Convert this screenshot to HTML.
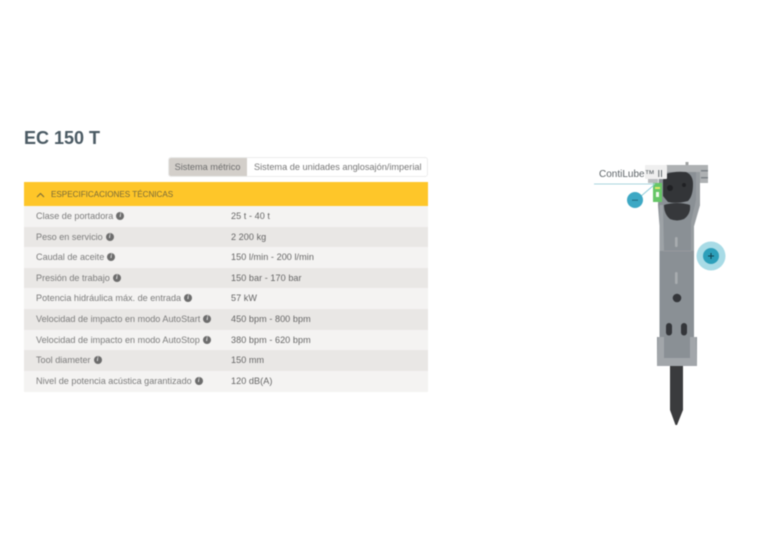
<!DOCTYPE html>
<html lang="es">
<head>
<meta charset="utf-8">
<title>EC 150 T</title>
<style>
html,body{margin:0;padding:0;background:#fff}
body{width:768px;height:543px;position:relative;overflow:hidden;font-family:"Liberation Sans",sans-serif;color:#6f6f6f}
#w{position:absolute;inset:0;filter:blur(.4px)}
h1{position:absolute;left:24px;top:127px;margin:0;font-size:18px;line-height:23px;font-weight:700;color:#4a5a63;letter-spacing:0}
.tg{position:absolute;left:168px;top:157px;width:260px;height:20px;box-sizing:border-box;border:1px solid #ececec;border-radius:3px;background:#fff;font-size:9.2px;line-height:19px;overflow:hidden}
.tg b{position:absolute;left:-1px;top:-1px;width:79px;height:20px;line-height:20px;background:#d3cfca;font-weight:400;text-align:center;color:#6e6e6e}
.tg span{position:absolute;left:85px;top:0;white-space:nowrap;color:#777}
.hd{position:absolute;left:24px;top:182px;width:404px;height:24px;background:#fec629;font-size:8.1px;line-height:25px;color:#76693a}
.hd span{position:absolute;left:27px;white-space:nowrap}
.hd svg{position:absolute;left:12px;top:10px}
.r{position:absolute;left:24px;width:404px;height:20.7px;line-height:21.5px;font-size:9.1px;color:#7c7c7c;white-space:nowrap}
.r.a{background:#f4f3f2}.r.b{background:#e9e7e5}
.r .k{position:absolute;left:12px}
.r .v{position:absolute;left:207px;color:#666;letter-spacing:.05px}
.i{display:inline-block;overflow:hidden;width:8px;height:8px;border-radius:50%;background:#6d6d6d;color:#eee;font:italic 700 6px/8px "Liberation Serif",serif;text-align:center;margin-left:3px;vertical-align:-1px}
svg.h{position:absolute;left:0;top:0}
</style>
</head>
<body>
<div id="w">
<h1>EC 150 T</h1>
<div class="tg"><b>Sistema métrico</b><span>Sistema de unidades anglosajón/imperial</span></div>
<div class="hd"><svg width="9" height="6" viewBox="0 0 9 6"><path d="M1 5 L4.5 1.5 L8 5" fill="none" stroke="#76693a" stroke-width="1"/></svg><span>ESPECIFICACIONES TÉCNICAS</span></div>

<div class="r a" style="top:206px"><span class="k">Clase de portadora<i class="i">i</i></span><span class="v">25 t - 40 t</span></div>
<div class="r b" style="top:226.5px"><span class="k">Peso en servicio<i class="i">i</i></span><span class="v">2 200 kg</span></div>
<div class="r a" style="top:247px"><span class="k">Caudal de aceite<i class="i">i</i></span><span class="v">150 l/min - 200 l/min</span></div>
<div class="r b" style="top:267.6px"><span class="k">Presión de trabajo<i class="i">i</i></span><span class="v">150 bar - 170 bar</span></div>
<div class="r a" style="top:288.3px"><span class="k">Potencia hidráulica máx. de entrada<i class="i">i</i></span><span class="v">57 kW</span></div>
<div class="r b" style="top:309px"><span class="k">Velocidad de impacto en modo AutoStart<i class="i">i</i></span><span class="v">450 bpm - 800 bpm</span></div>
<div class="r a" style="top:329.7px"><span class="k">Velocidad de impacto en modo AutoStop<i class="i">i</i></span><span class="v">380 bpm - 620 bpm</span></div>
<div class="r b" style="top:350.3px"><span class="k">Tool diameter<i class="i">i</i></span><span class="v">150 mm</span></div>
<div class="r a" style="top:371px"><span class="k">Nivel de potencia acústica garantizado<i class="i">i</i></span><span class="v">120 dB(A)</span></div>

<svg class="h" width="768" height="543" viewBox="0 0 768 543">
  <!-- tool -->
  <path d="M670 365 H683 V410 L677 425 L675.5 425 L670 410 Z" fill="#3a3b3d"/>
  <!-- top bracket -->
  <rect x="685.5" y="162" width="3" height="4" fill="#a2a4a4"/>
  <path d="M666 165 H708 V183 H700 V186 H666 Z" fill="#aeb1b3"/>
  <rect x="701" y="170" width="7" height="1.5" fill="#7d8388"/>
  <rect x="701" y="177" width="7" height="1.5" fill="#7d8388"/>
  <!-- body -->
  <path d="M659 172 H700 L700 205 L694 226 V337 H697 V366 H657 V337 H659.5 V226 L658 205 Z" fill="#8a9095"/>
  <path d="M659.5 205 L663 205 L664 251 H659.5 Z" fill="#9da2a6"/>
  <path d="M700 172 V205 L694 226 V251 H691 V222 L696 200 V172 Z" fill="#989da1"/>
  <rect x="663" y="250.5" width="28" height="1" fill="#969a9e"/>
  <rect x="675" y="237" width="2.6" height="10" rx="1.3" fill="#a8acaf"/>
  <rect x="675" y="272" width="2.6" height="12" rx="1.3" fill="#a8acaf"/>
  <!-- lower flange -->
  <path d="M658 337 H664 V358 H690 V337 H696 L697 366 H657 Z" fill="#a2a6aa"/>
  <!-- black blobs -->
  <path d="M666 174 Q674 171 686 172 Q693 175 693 184 Q693 196 688 201 Q677 204 668 202 L663 196 L663 180 Z" fill="#333538"/>
  <circle cx="670" cy="188" r="3" fill="#202124"/>
  <circle cx="684" cy="185" r="2" fill="#202124"/>
  <path d="M664 205 Q677 201 690 205 Q691 214 684 219 Q677 222 670 219 Q664 214 664 205 Z" fill="#36383b"/>
  <!-- holes -->
  <circle cx="677" cy="298" r="4.3" fill="#34363a"/>
  <rect x="666" y="323" width="6" height="12.5" rx="3" fill="#34363a"/>
  <rect x="681" y="323" width="6" height="12.5" rx="3" fill="#34363a"/>
  <!-- green part -->
  <rect x="653" y="183" width="9" height="19" fill="#66c667"/>
  <rect x="655" y="187" width="5" height="2" fill="#e4e86b"/>
  <rect x="656" y="192" width="3" height="5" fill="#f2f8ee"/>
  <!-- label -->
  <rect x="645" y="165" width="22" height="14" rx="1" fill="#efefef"/>
  <rect x="648" y="179" width="10" height="4" fill="#b9bcbe"/>
  <rect x="594" y="183.5" width="61" height="1" fill="#a9d5df"/>
  <path d="M640 197 L654 185" stroke="#8ccbd9" stroke-width="1"/>
  <text x="599" y="177" font-family="Liberation Sans, sans-serif" font-size="10" fill="#5d6468">ContiLube™ II</text>
  <!-- minus -->
  <circle cx="635" cy="200" r="8" fill="#3da8c4"/>
  <rect x="632" y="199.7" width="6" height="1" fill="#1f6a80"/>
  <!-- plus -->
  <circle cx="711" cy="256" r="14.5" fill="#a8dbe6"/>
  <circle cx="711" cy="256" r="8" fill="#2c9fba"/>
  <path d="M708 256 H714 M711 253 V259" stroke="#123f4c" stroke-width="1"/>
</svg>
</div>
</body>
</html>
